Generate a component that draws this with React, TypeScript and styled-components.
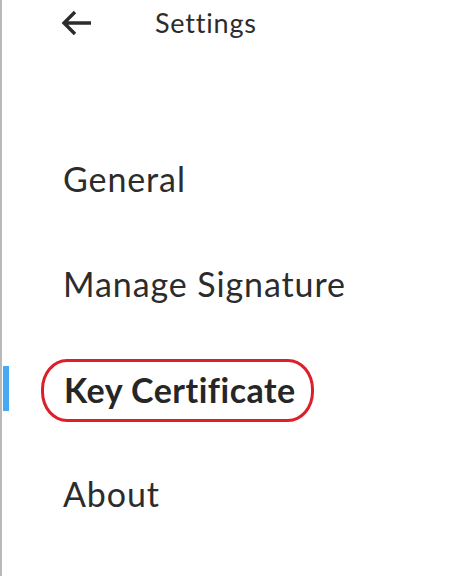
import React from "react";
import styled, { createGlobalStyle } from "styled-components";

const Global = createGlobalStyle`
  html, body { margin: 0; padding: 0; background: #ffffff; }
  body { font-family: "Lato", "Noto Sans", sans-serif; }
`;

const Page = styled.div`
  box-sizing: border-box;
  width: 470px;
  height: 576px;
  border-left: 2px solid #b9b9b9;
  display: flex;
  flex-direction: column;
  color: #2c2c2c;
`;

const Header = styled.header`
  height: 46px;
  display: flex;
  align-items: center;
  padding-left: 59px;
`;

const BackButton = styled.button`
  border: 0;
  background: none;
  padding: 0;
  width: 32px;
  height: 28px;
  display: flex;
  align-items: center;
  cursor: pointer;
  color: #2c2c2c;
`;

const Title = styled.h1`
  margin: -2px 0 0 62px;
  font-size: 27px;
  font-weight: 400;
  letter-spacing: 0.8px;
`;

const Nav = styled.nav`
  margin-top: 80px;
  display: flex;
  flex-direction: column;
`;

const NavItem = styled.div`
  height: 105px;
  display: flex;
  align-items: center;
`;

const Indicator = styled.span<{ $active?: boolean }>`
  width: 6px;
  height: 45px;
  margin-left: 1px;
  background: ${(p) => (p.$active ? "#47a9f3" : "transparent")};
`;

const Label = styled.span<{ $active?: boolean; $ring?: boolean }>`
  margin-left: ${(p) => (p.$ring ? "32px" : "54px")};
  font-size: 34px;
  font-weight: ${(p) => (p.$active ? 700 : 400)};
  letter-spacing: ${(p) => (p.$active ? "0.5px" : "0.9px")};
  line-height: 1;
  color: ${(p) => (p.$active ? "#262626" : "#2c2c2c")};
  ${(p) =>
    p.$ring
      ? `
    border: 3px solid #dc1f2a;
    border-radius: 26px / 30px;
    padding: 11px 15px 12px 20px;
    margin-top: 3px;
  `
      : ""}
`;

const items = [
  { label: "General" },
  { label: "Manage Signature" },
  { label: "Key Certificate", active: true },
  { label: "About" },
];

export default function App() {
  return (
    <>
      <Global />
      <Page>
        <Header>
          <BackButton aria-label="Back">
            <svg width="32" height="28" viewBox="0 0 32 28" fill="none">
              <path
                d="M30 14H3M14 3L3 14L14 25"
                stroke="#2c2c2c"
                strokeWidth="3.4"
                strokeLinecap="butt"
                strokeLinejoin="miter"
              />
            </svg>
          </BackButton>
          <Title>Settings</Title>
        </Header>
        <Nav>
          {items.map((it) => (
            <NavItem key={it.label}>
              <Indicator $active={it.active} />
              <Label $active={it.active} $ring={it.active}>
                {it.label}
              </Label>
            </NavItem>
          ))}
        </Nav>
      </Page>
    </>
  );
}
